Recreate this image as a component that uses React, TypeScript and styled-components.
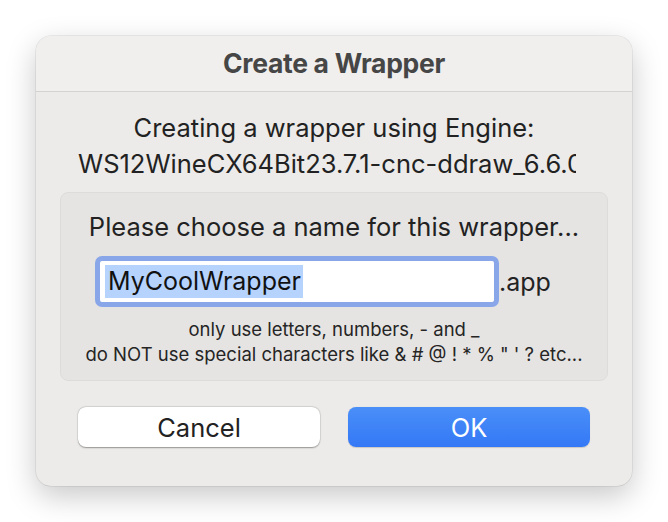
import React from "react";
import styled, { createGlobalStyle } from "styled-components";

const GlobalStyle = createGlobalStyle`
  html, body {
    margin: 0;
    padding: 0;
    background: #ffffff;
  }
  body {
    font-family: Inter, "Noto Sans", "Liberation Sans", sans-serif;
    -webkit-font-smoothing: antialiased;
  }
`;

const Page = styled.div`
  width: 668px;
  height: 522px;
  padding: 36px 36px 0 36px;
  box-sizing: border-box;
`;

const Dialog = styled.div`
  width: 596px;
  height: 450px;
  background: #ecebe9;
  border-radius: 15px;
  box-shadow: 0 10px 30px rgba(0, 0, 0, 0.22), 0 0 0 0.5px rgba(0, 0, 0, 0.12);
  display: flex;
  flex-direction: column;
  overflow: hidden;
`;

const TitleBar = styled.div`
  height: 56px;
  background: #f0efed;
  border-bottom: 1px solid #d3d2d0;
  display: flex;
  align-items: center;
  justify-content: center;
  font-size: 26.5px;
  font-weight: 700;
  color: #464646;
  letter-spacing: -0.3px;
  padding-bottom: 2px;
  box-sizing: border-box;
`;

const Body = styled.div`
  display: flex;
  flex-direction: column;
  padding: 18px 24px 0 24px;
`;

// engine name is wider than the dialog, so it is cut at the right edge
const InfoLine = styled.div<{ $clip?: boolean }>`
  font-size: 25.5px;
  line-height: 36px;
  color: #222;
  white-space: nowrap;
  text-align: ${(p) => (p.$clip ? "left" : "center")};
  overflow: hidden;
  margin: ${(p) => (p.$clip ? "0 32px 0 18px" : "0")};
`;

const NameBox = styled.div`
  margin-top: 10px;
  height: 189px;
  background: #e5e4e2;
  border: 1px solid #dddcda;
  border-radius: 8px;
  box-sizing: border-box;
  display: flex;
  flex-direction: column;
  align-items: center;
  padding-top: 16px;
`;

const Prompt = styled.div`
  font-size: 25.5px;
  line-height: 36px;
  color: #222;
`;

const InputRow = styled.div`
  margin-top: 11px;
  display: flex;
  align-items: center;
  margin-right: 22px;
`;

const FieldRing = styled.div`
  width: 404px;
  height: 51px;
  box-sizing: border-box;
  border: 5px solid #89a6e8;
  border-radius: 7px;
  background: #ffffff;
  display: flex;
  align-items: center;
  padding-left: 5px;
`;

const Selected = styled.span`
  background: #b5d3fd;
  color: #111;
  font-size: 25px;
  line-height: 33px;
  padding: 0 2px 0 3px;
`;

const Suffix = styled.span`
  font-size: 25px;
  color: #222;
`;

const Hint = styled.div<{ $first?: boolean }>`
  font-size: 18.5px;
  line-height: 25px;
  color: #252525;
  margin-top: ${(p) => (p.$first ? "10px" : "0")};
`;

const ButtonRow = styled.div`
  display: flex;
  justify-content: center;
  gap: 28px;
  margin-top: 26px;
`;

const Button = styled.button<{ $primary?: boolean }>`
  width: 242px;
  height: 40px;
  border-radius: 8px;
  font-family: inherit;
  font-size: 25.5px;
  cursor: pointer;
  border: none;
  padding: 0;
  color: ${(p) => (p.$primary ? "#ffffff" : "#222")};
  background: ${(p) =>
    p.$primary ? "linear-gradient(#4a8ff8, #3478f6)" : "#ffffff"};
  box-shadow: ${(p) =>
    p.$primary
      ? "0 0.5px 1px rgba(0,0,0,0.15)"
      : "0 0.5px 1.5px rgba(0,0,0,0.35), 0 0 0 0.5px rgba(0,0,0,0.08)"};
`;

const App = () => {
  return (
    <Page>
      <GlobalStyle />
      <Dialog>
        <TitleBar>Create a Wrapper</TitleBar>
        <Body>
          <InfoLine>Creating a wrapper using Engine:</InfoLine>
          <InfoLine $clip>WS12WineCX64Bit23.7.1-cnc-ddraw_6.6.0.0</InfoLine>
          <NameBox>
            <Prompt>Please choose a name for this wrapper...</Prompt>
            <InputRow>
              <FieldRing>
                <Selected>MyCoolWrapper</Selected>
              </FieldRing>
              <Suffix>.app</Suffix>
            </InputRow>
            <Hint $first>only use letters, numbers, - and _</Hint>
            <Hint>do NOT use special characters like &amp; # @ ! * % " ' ? etc...</Hint>
          </NameBox>
          <ButtonRow>
            <Button>Cancel</Button>
            <Button $primary>OK</Button>
          </ButtonRow>
        </Body>
      </Dialog>
    </Page>
  );
};

export default App;
